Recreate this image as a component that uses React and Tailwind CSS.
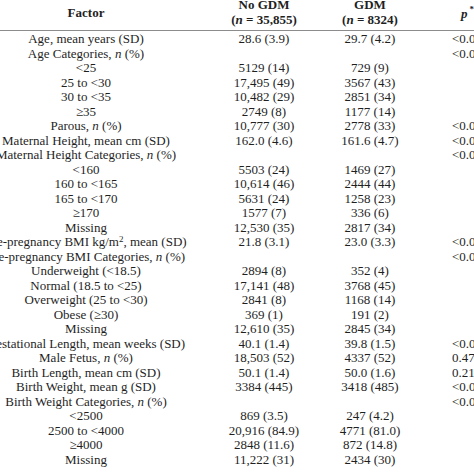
const N = () => <span className="italic">n</span>;

const rows = [
  [<>Age, mean years (SD)</>, '28.6 (3.9)', '29.7 (4.2)', '<0.001'],
  [<>Age Categories, <N /> (%)</>, '', '', '<0.001'],
  [<>&lt;25</>, '5129 (14)', '729 (9)', ''],
  [<>25 to &lt;30</>, '17,495 (49)', '3567 (43)', ''],
  [<>30 to &lt;35</>, '10,482 (29)', '2851 (34)', ''],
  [<>≥35</>, '2749 (8)', '1177 (14)', ''],
  [<>Parous, <N /> (%)</>, '10,777 (30)', '2778 (33)', '<0.001'],
  [<>Maternal Height, mean cm (SD)</>, '162.0 (4.6)', '161.6 (4.7)', '<0.001'],
  [<>Maternal Height Categories, <N /> (%)</>, '', '', '<0.001'],
  [<>&lt;160</>, '5503 (24)', '1469 (27)', ''],
  [<>160 to &lt;165</>, '10,614 (46)', '2444 (44)', ''],
  [<>165 to &lt;170</>, '5631 (24)', '1258 (23)', ''],
  [<>≥170</>, '1577 (7)', '336 (6)', ''],
  [<>Missing</>, '12,530 (35)', '2817 (34)', ''],
  [<>Pre-pregnancy BMI kg/m<sup className="text-[9px]">2</sup>, mean (SD)</>, '21.8 (3.1)', '23.0 (3.3)', '<0.001'],
  [<>Pre-pregnancy BMI Categories, <N /> (%)</>, '', '', '<0.001'],
  [<>Underweight (&lt;18.5)</>, '2894 (8)', '352 (4)', ''],
  [<>Normal (18.5 to &lt;25)</>, '17,141 (48)', '3768 (45)', ''],
  [<>Overweight (25 to &lt;30)</>, '2841 (8)', '1168 (14)', ''],
  [<>Obese (≥30)</>, '369 (1)', '191 (2)', ''],
  [<>Missing</>, '12,610 (35)', '2845 (34)', ''],
  [<>Gestational Length, mean weeks (SD)</>, '40.1 (1.4)', '39.8 (1.5)', '<0.001'],
  [<>Male Fetus, <N /> (%)</>, '18,503 (52)', '4337 (52)', '0.470'],
  [<>Birth Length, mean cm (SD)</>, '50.1 (1.4)', '50.0 (1.6)', '0.210'],
  [<>Birth Weight, mean g (SD)</>, '3384 (445)', '3418 (485)', '<0.001'],
  [<>Birth Weight Categories, <N /> (%)</>, '', '', '<0.001'],
  [<>&lt;2500</>, '869 (3.5)', '247 (4.2)', ''],
  [<>2500 to &lt;4000</>, '20,916 (84.9)', '4771 (81.0)', ''],
  [<>≥4000</>, '2848 (11.6)', '872 (14.8)', ''],
  [<>Missing</>, '11,222 (31)', '2434 (30)', ''],
];

const cols = 'grid grid-cols-[232px_124px_88px_128px]';

export default function App() {
  return (
    <div className="w-[474px] h-[474px] overflow-hidden bg-white text-[#1f1f1f] font-['Liberation_Serif',serif] text-[13px]">
      <div className="ml-[-30px] w-[572px]">
        <div className={`${cols} mt-[-3px] pb-[3px] border-b-[1.5px] border-[#8c8c8c] font-bold leading-[15px]`}>
          <div className="flex items-center justify-center">Factor</div>
          <div className="text-center">
            <div>No GDM</div>
            <div>(<N /> = 35,855)</div>
          </div>
          <div className="text-center">
            <div>GDM</div>
            <div>(<N /> = 8324)</div>
          </div>
          <div className="flex items-center pl-[47px] pt-[3px]">
            <span className="italic">p</span>
            <sup className="text-[9px] ml-[2px]">*</sup>
          </div>
        </div>
        <div className="pt-[1px]">
          {rows.map((r, i) => (
            <div key={i} className={`${cols} h-[14.5px] leading-[14.5px] whitespace-nowrap`}>
              <div className="text-center">{r[0]}</div>
              <div className="text-center">{r[1]}</div>
              <div className="text-center">{r[2]}</div>
              <div className="pl-[38px]">{r[3]}</div>
            </div>
          ))}
        </div>
      </div>
    </div>
  );
}
